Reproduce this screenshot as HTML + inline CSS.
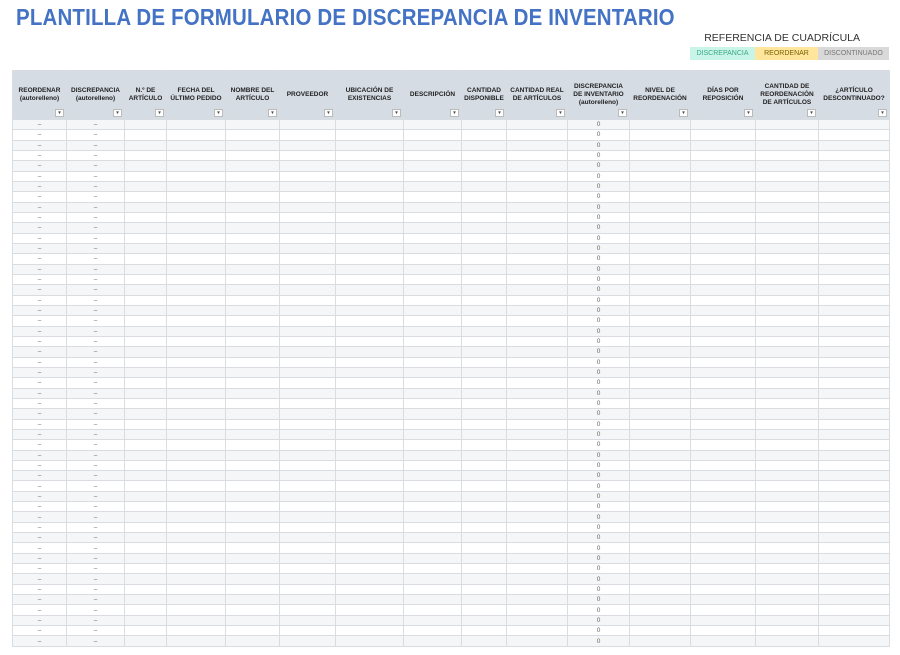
<!DOCTYPE html><html><head><meta charset="utf-8"><style>
body{margin:0;width:900px;height:655px;background:#fff;font-family:"Liberation Sans",sans-serif;position:relative;overflow:hidden}
h1{position:absolute;left:16px;top:4px;margin:0;font-size:23px;color:#4472c4;font-weight:bold;letter-spacing:0.2px;white-space:nowrap;transform:scaleX(0.89);transform-origin:left}
.ref{position:absolute;left:690px;width:170px;text-align:right;top:32px;font-size:10.5px;color:#333}
.lg{position:absolute;top:47px;height:13px;font-size:7px;text-align:center;line-height:13px}
table{position:absolute;left:12px;top:70px;border-collapse:collapse;table-layout:fixed}
td,th{border:1px solid #d9dce1;padding:0;font-size:6.5px;text-align:center}
th{background:#d6dce4;height:48px;font-weight:bold;color:#222;position:relative;line-height:8px}
th span{position:absolute;right:2px;bottom:2px;width:7px;height:6px;background:#fff;border:1px solid #bbb;font-size:5px;line-height:6px;color:#555}
td{height:9.33px;line-height:9px;color:#666;font-size:6.5px}
tr:nth-child(odd) td{background:#f5f6f8}
</style></head><body>
<h1>PLANTILLA DE FORMULARIO DE DISCREPANCIA DE INVENTARIO</h1>
<div class="ref">REFERENCIA DE CUADRÍCULA</div>
<div class="lg" style="left:690px;width:65px;background:#c9f5e8;color:#3aa88a">DISCREPANCIA</div>
<div class="lg" style="left:755px;width:63px;background:#ffe69c;color:#7a6000">REORDENAR</div>
<div class="lg" style="left:818px;width:71px;background:#d9d9d9;color:#777">DISCONTINUADO</div>
<table>
<colgroup><col style="width:54px"><col style="width:58px"><col style="width:42px"><col style="width:59px"><col style="width:54px"><col style="width:56px"><col style="width:68px"><col style="width:58px"><col style="width:45px"><col style="width:61px"><col style="width:62px"><col style="width:61px"><col style="width:65px"><col style="width:63px"><col style="width:71px"></colgroup>
<thead><tr>
<th>REORDENAR<br>(autorelleno)<span>▾</span></th><th>DISCREPANCIA<br>(autorelleno)<span>▾</span></th><th>N.º DE<br>ARTÍCULO<span>▾</span></th><th>FECHA DEL<br>ÚLTIMO PEDIDO<span>▾</span></th><th>NOMBRE DEL<br>ARTÍCULO<span>▾</span></th><th>PROVEEDOR<span>▾</span></th><th>UBICACIÓN DE<br>EXISTENCIAS<span>▾</span></th><th>DESCRIPCIÓN<span>▾</span></th><th>CANTIDAD<br>DISPONIBLE<span>▾</span></th><th>CANTIDAD REAL<br>DE ARTÍCULOS<span>▾</span></th><th>DISCREPANCIA<br>DE INVENTARIO<br>(autorelleno)<span>▾</span></th><th>NIVEL DE<br>REORDENACIÓN<span>▾</span></th><th>DÍAS POR<br>REPOSICIÓN<span>▾</span></th><th>CANTIDAD DE<br>REORDENACIÓN<br>DE ARTÍCULOS<span>▾</span></th><th>¿ARTÍCULO<br>DESCONTINUADO?<span>▾</span></th>
</tr></thead>
<tbody id="b"></tbody></table>
<script>
var h='';for(var i=0;i<51;i++){h+='<tr><td>–</td><td>–</td><td></td><td></td><td></td><td></td><td></td><td></td><td></td><td></td><td>0</td><td></td><td></td><td></td><td></td></tr>';}
document.getElementById('b').innerHTML=h;
</script>
</body></html>
